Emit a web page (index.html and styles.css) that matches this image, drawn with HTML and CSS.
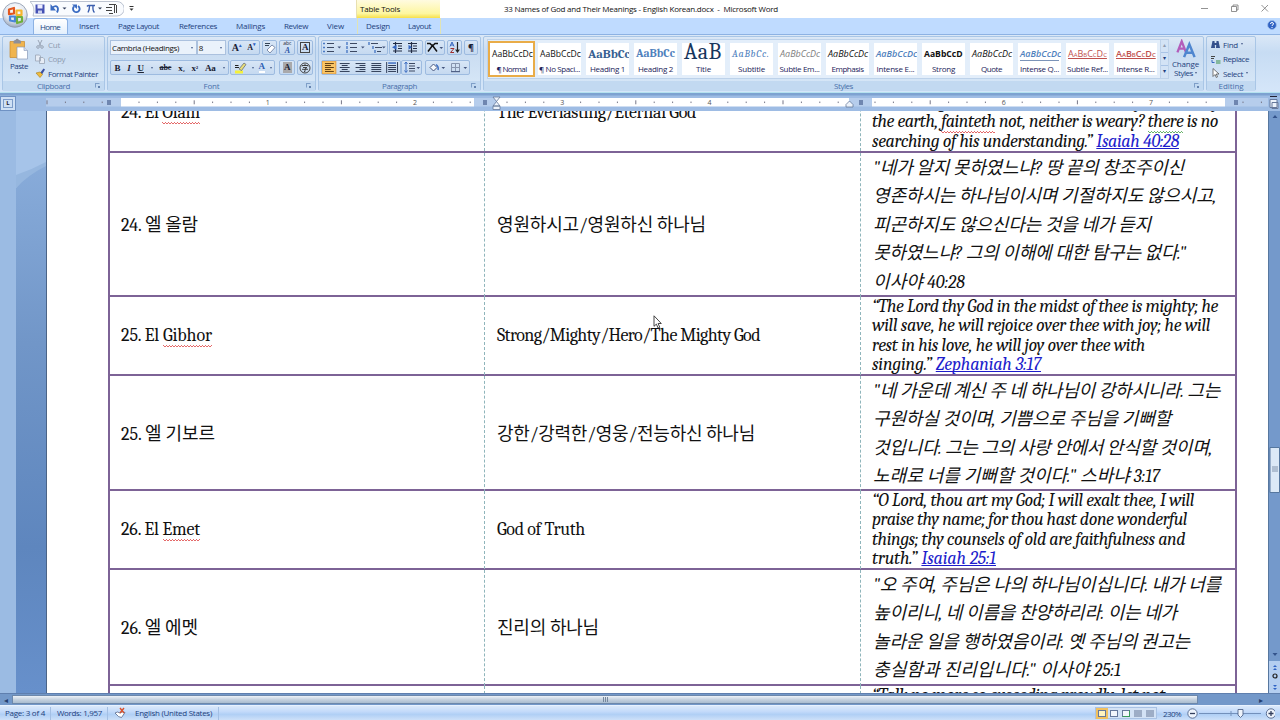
FILE: index.html
```html
<!DOCTYPE html>
<html lang="en">
<head>
    <meta charset="UTF-8">
    <meta name="viewport" content="width=device-width, initial-scale=1.0">
    <title>33 Names of God and Their Meanings - English Korean.docx - Microsoft Word</title>
    <link rel="stylesheet" href="styles.css">
</head>
<body>
<div class="window">

    <!-- Office button lies over the title bar and the tabs -->
    <div class="office-btn">
        <svg width="26" height="26" viewBox="0 0 26 26">
            <defs>
                <radialGradient id="orb" cx=".5" cy=".3" r=".75"><stop offset="0" stop-color="#fff"/><stop offset=".6" stop-color="#dfe5ee"/><stop offset="1" stop-color="#8b9ab3"/></radialGradient>
            </defs>
            <circle cx="13" cy="13" r="12.3" fill="url(#orb)" stroke="#8a96aa" stroke-width=".8"/>
            <g fill="none" stroke-width="2.2" stroke-linejoin="round">
                <path d="M7 7.500l5-1.500v5.500l-5 .6z" stroke="#e2571e"/>
                <path d="M14.500 8.500h5v4.500h-5z" stroke="#f4b52e"/>
                <path d="M8 14.500h5v5l-5-1z" stroke="#4a86d8"/>
                <path d="M15 15h5v4.500l-5 1.500z" stroke="#6eb03d"/>
            </g>
        </svg>
    </div>

    <div class="titlebar">
        <div class="qat">
            <svg width="94" height="16" viewBox="0 0 94 16">
                <path d="M0 .5H87a7 7 0 0 1 0 14.500H3Q6 6 0 .5z" fill="#f9fbfe" stroke="#a9b3c4" stroke-width=".8"/>
                <path d="M5.500 3.500h9v9h-9z" fill="#4551b4"/><path d="M7.500 3.500h5v4h-5z" fill="#eef"/><path d="M8 9.500h4v3H8z" fill="#cdd2f0"/>
                <path d="M22.500 6.500c4-3 7-.5 4.500 5" fill="none" stroke="#3a6bc2" stroke-width="1.900"/><path d="M20.500 3v6.500h5.500z" fill="#3a6bc2"/>
                <path d="M32.500 6.500h4l-2 2zM68 6.500h4l-2 2z" fill="#333f5c"/>
                <path d="M44 5.500a3.300 3.300 0 1 0 4-.5" fill="none" stroke="#3a6bc2" stroke-width="1.900"/><path d="M42 3.500h5v4.500z" fill="#3a6bc2"/>
                <path d="M57 5.500q1-1.500 2.500-1H65M59.500 5q0 4-1.500 6.500M63 5q-.5 5 1.500 6.500" fill="none" stroke="#3d5fae" stroke-width="1.400"/>
                <path d="M79 3.500h7M76 6.500h6M76 9.500h6M79 12.500h4M84.500 4v8M86.500 4v8" stroke="#444" stroke-width="1" fill="none"/>
            </svg>
            <svg width="8" height="16" viewBox="0 0 8 16"><path d="M1.500 5.500h4" stroke="#333"/><path d="M1.500 7.500h4l-2 2.200z" fill="#333"/></svg>
        </div>
        <div class="table-tools"><span data-w="40">Table Tools</span></div>
        <div class="title"><span data-w="274">33 Names of God and Their Meanings - English Korean.docx&nbsp; -&nbsp; Microsoft Word</span></div>
        <svg class="win-btns" width="76" height="16" viewBox="0 0 76 16" fill="none" stroke="#777" stroke-width=".8">
            <path d="M3 7.500h7M33.500 5.500h5v5h-5zM35 5.500V4h5v5h-1.500M63.500 4l6.500 6.500M70 4l-6.500 6.500"/>
        </svg>
    </div>

    <div class="tabs">
        <div class="tab active"><span data-w="20">Home</span></div>
        <div class="tab tab-insert"><span data-w="20">Insert</span></div>
        <div class="tab tab-page"><span data-w="41">Page Layout</span></div>
        <div class="tab tab-ref"><span data-w="38">References</span></div>
        <div class="tab tab-mail"><span data-w="29">Mailings</span></div>
        <div class="tab tab-review"><span data-w="24">Review</span></div>
        <div class="tab tab-view"><span data-w="17">View</span></div>
        <div class="tab tab-design"><span data-w="24">Design</span></div>
        <div class="tab tab-layout"><span data-w="23">Layout</span></div>
        <svg class="help" width="10" height="10" viewBox="0 0 10 10"><circle cx="5" cy="5" r="4.400" fill="#2f62c4" stroke="#9dbbe8" stroke-width=".8"/><path d="M3.500 4Q3.500 2.500 5 2.500T6.500 4Q6.300 4.800 5 5.500V6M5 7v1" fill="none" stroke="#fff" stroke-width="1"/></svg>
    </div>

    <div class="ribbon">
        <div class="group g-clipboard">
            <div class="group-body clip">
                <div class="paste">
                    <svg width="20" height="22" viewBox="0 0 20 22">
                        <path d="M1 3.500h14.500v16H1z" fill="#f0b44e" stroke="#c98a2b" stroke-width=".7"/>
                        <path d="M4.500 3.500q0-1.500 2-1.500 1.500-2.500 3.500 0 2 0 2 1.500v2h-7.500z" fill="#8d8f98"/>
                        <path d="M8 9h7l3.500 3.500v8.500H8z" fill="#fff" stroke="#8899b8" stroke-width=".7"/><path d="M15 9v3.500h3.500" fill="#d5dff0" stroke="#8899b8" stroke-width=".6"/>
                    </svg>
                    <span data-w="18">Paste</span>
                    <i class="arrow"></i>
                </div>
                <div class="clip-list">
                    <div class="off"><svg width="10" height="10" viewBox="0 0 10 10" fill="none" stroke="#99a4b5"><path d="M3 1l3 6M7 1L4 7"/><circle cx="3" cy="8" r="1.300"/><circle cx="7" cy="8" r="1.300"/></svg><span data-w="12">Cut</span></div>
                    <div class="off"><svg width="10" height="10" viewBox="0 0 10 10" fill="#e6ecf5" stroke="#99a4b5" stroke-width=".8"><path d="M.5 1h4l1 1v5h-5zM4.500 3.500H8l1.500 1.500v4.500h-5z"/></svg><span data-w="17">Copy</span></div>
                    <div><svg width="10" height="10" viewBox="0 0 10 10"><path d="M5 5l3.500-4.500 1.500 1L7 6.500z" fill="#3a4fa0"/><path d="M1 5l4-1 2.500 2.500L5 9.500z" fill="#eebc3e" stroke="#a77b1c" stroke-width=".6"/></svg><span data-w="50">Format Painter</span></div>
                </div>
            </div>
            <div class="group-label"><span data-w="33">Clipboard</span><i class="launch"></i></div>
        </div>

        <div class="group g-font">
            <div class="group-body">
                <div class="tools row-one">
                    <div class="combo family"><span data-w="67">Cambria (Headings)</span><i class="arrow"></i></div>
                    <div class="combo size"><span>8</span><i class="arrow"></i></div>
                    <div class="btns grow"><b class="serif big">A<sup>▴</sup></b><b class="serif mid">A<sup>▾</sup></b></div>
                    <div class="btns one"><svg width="12" height="12" viewBox="0 0 12 12"><path d="M1 1.500h5M1 3.500h4" stroke="#345"/><path d="M3 8l5-5 3 2.500L6 11z" fill="#fff" stroke="#66779b" stroke-width=".8"/></svg></div>
                    <div class="btns one abc"><span>abc</span><em>A</em></div>
                    <div class="btns one"><b class="boxed">A</b></div>
                </div>
                <div class="tools row-two">
                    <div class="btns seven">
                        <b class="serif">B</b><b class="serif it">I</b><b class="serif un">U</b><i class="arrow"></i><b class="serif strike">abc</b><b class="serif">x<sub>₂</sub></b><b class="serif">x<sub>²</sub></b><b class="serif">Aa</b><i class="arrow"></i>
                    </div>
                    <div class="btns colors">
                        <svg width="13" height="13" viewBox="0 0 13 13"><path d="M1 9.500h8v3H1z" fill="#f4f03a"/><path d="M5 8l5-6 2 1.500-4.500 6z" fill="#e8dd7a" stroke="#56606f" stroke-width=".7"/><path d="M1 4.500h3.500M1 6.500h4" stroke="#222" stroke-width="1.200"/></svg><i class="arrow"></i>
                        <b class="serif blue-a">A</b><i class="arrow"></i>
                    </div>
                    <div class="btns one two-b"><b class="shaded">A</b></div>
                    <div class="btns one"><svg width="12" height="12" viewBox="0 0 12 12" fill="none" stroke="#333" stroke-width=".9"><circle cx="6" cy="6" r="5"/><path d="M3 4.500V3.500h6v1M6 2v2M4 5.500h4L6 7v2.500H5M3 7.300h6"/></svg></div>
                </div>
            </div>
            <div class="group-label"><span data-w="16">Font</span><i class="launch"></i></div>
        </div>

        <div class="group g-para">
            <div class="group-body">
                <div class="tools row-one">
                    <div class="btns w65">
                        <svg width="65" height="13" viewBox="0 0 65 13" fill="none" stroke="#3c4963" stroke-width="1.100">
                            <path d="M5 2.500h7M5 6.500h7M5 10.500h7M28 2.500h7M28 6.500h7M28 10.500h7M49 2.500h7M53 6.500h7M55 10.500h4"/>
                            <path d="M1 2.500h2M1 6.500h2M1 10.500h2M25 1v3M25 5v3M25 9v3M47 1v3M51 5v3M53 9v3" stroke="#4a79c4" stroke-width="1.400"/>
                            <path d="M15.500 5.500h3.600l-1.800 2zM39 5.500h3.600l-1.800 2zM60 5.500h3.600l-1.800 2z" fill="#44557d" stroke="none"/>
                        </svg>
                    </div>
                    <div class="btns w32">
                        <svg width="32" height="13" viewBox="0 0 32 13" fill="none" stroke="#222c44" stroke-width="1.200">
                            <path d="M3 2.500h9M8 5h4M8 7.500h4M3 10h9M18 2.500h9M23 5h4M23 7.500h4M18 10h9M5.500 1v11M21.500 1v11"/>
                            <path d="M6.500 3.700v5L2 6.200zM18.500 3.700v5L22 6.200z" fill="#3566c0" stroke="none"/>
                        </svg>
                    </div>
                    <div class="btns w19"><svg width="18" height="13" viewBox="0 0 18 13"><path d="M2 10.500L6.500 4.500 11 10.500M1 2.500h3l2 2M12 2.500H9l-2 2" fill="none" stroke="#111" stroke-width="1.500"/><path d="M13.500 6h3.600l-1.800 2z" fill="#44557d"/></svg></div>
                    <div class="btns w15"><svg width="13" height="13" viewBox="0 0 13 13" fill="none"><path d="M2 5.500L4 1l2 4.500M2.700 4h2.600" stroke="#3566c0"/><path d="M2.500 7.500H6l-3.500 4H6" stroke="#a03030"/><path d="M9.500 1v9M7.700 8.500l1.800 2.500 1.800-2.500" stroke="#222" stroke-width="1.200"/></svg></div>
                    <div class="btns w15"><b class="pil">¶</b></div>
                </div>
                <div class="tools row-two">
                    <div class="btns w79">
                        <svg width="79" height="13" viewBox="0 0 79 13" fill="none" stroke="#2d3a54">
                            <path d="M0 0h14v13H0z" fill="#fbc766" stroke="#e39a3c"/>
                            <path d="M3 2.500h9M3 4.500h6M3 6.500h9M3 8.500h6M3 10.500h9" stroke="#5c3b10"/>
                            <path d="M18 2.500h10M20 4.500h6M18 6.500h10M20 8.500h6M18 10.500h10M34 2.500h10M38 4.500h6M34 6.500h10M38 8.500h6M34 10.500h10M50 2.500h10M50 4.500h10M50 6.500h10M50 8.500h10M50 10.500h10M67 4.500h8M67 6.500h8M67 8.500h8M67 10.500h8M65.500 1v11M76.500 1v11"/>
                            <path d="M67 2h8" stroke="#3f6fc2" stroke-width="1.500"/>
                        </svg>
                    </div>
                    <div class="btns w20"><svg width="18" height="13" viewBox="0 0 18 13" fill="none"><path d="M6 2.500h6M6 5h6M6 7.500h6M6 10h6" stroke="#3c4963"/><path d="M3 1v10M1.500 3L3 1l1.500 2M1.500 9.500L3 11.500l1.500-2" stroke="#3f6fc2"/><path d="M13.500 6h3.600l-1.800 2z" fill="#44557d"/></svg></div>
                    <div class="btns w43"><svg width="42" height="13" viewBox="0 0 42 13" fill="none"><path d="M3 6.500L6.500 3 10 6.500 6.500 10z" fill="#f5f8fc" stroke="#44557d"/><path d="M9 3.500q3 2 2 5.500" stroke="#3f6fc2" stroke-width="1.500"/><path d="M24.500 2.500h8v8h-8zM28.500 2.500v8M24.500 6.500h8" stroke="#8795ae"/><path d="M24 10.700h9" stroke="#44557d"/><path d="M14.500 6h3.600l-1.800 2zM36.500 6h3.600l-1.800 2z" fill="#44557d"/></svg></div>
                </div>
            </div>
            <div class="group-label"><span data-w="35">Paragraph</span><i class="launch"></i></div>
        </div>

        <div class="group g-styles">
            <div class="group-body styles">
                <div class="gallery">
                    <div class="tile selected"><b class="pv">AaBbCcDc</b><span data-w="30">¶ Normal</span></div>
                    <div class="tile"><b class="pv">AaBbCcDc</b><span data-w="41">¶ No Spaci...</span></div>
                    <div class="tile"><b class="pv h1">AaBbCc</b><span data-w="35">Heading 1</span></div>
                    <div class="tile"><b class="pv h2">AaBbCc</b><span data-w="35">Heading 2</span></div>
                    <div class="tile"><b class="pv ttl">AaB</b><span data-w="15">Title</span></div>
                    <div class="tile"><b class="pv sub">AaBbCc.</b><span data-w="27">Subtitle</span></div>
                    <div class="tile"><b class="pv em gray">AaBbCcDc</b><span data-w="40">Subtle Em...</span></div>
                    <div class="tile"><b class="pv em">AaBbCcDc</b><span data-w="32">Emphasis</span></div>
                    <div class="tile"><b class="pv em blue">AaBbCcDc</b><span data-w="38">Intense E...</span></div>
                    <div class="tile"><b class="pv strong">AaBbCcD</b><span data-w="23">Strong</span></div>
                    <div class="tile"><b class="pv em">AaBbCcDc</b><span data-w="21">Quote</span></div>
                    <div class="tile"><b class="pv em blue line">AaBbCcDc</b><span data-w="39">Intense Q...</span></div>
                    <div class="tile"><b class="pv ref">AaBbCcDc</b><span data-w="41">Subtle Ref...</span></div>
                    <div class="tile"><b class="pv ref heavy">AaBbCcDc</b><span data-w="38">Intense R...</span></div>
                    <div class="gallery-nav"><i class="off">▴</i><i>▾</i><i>▾</i></div>
                </div>
                <div class="change">
                    <svg width="22" height="21" viewBox="0 0 22 22" fill="none"><path d="M2 14L6.500 2.500 11 14M3.500 10h6" stroke="#b35cba" stroke-width="2.400"/><path d="M9 19L14.500 5.500 20 19M11 14.500h7" stroke="#4f86cf" stroke-width="2.600"/></svg>
                    <span data-w="27">Change</span>
                    <div><span data-w="19">Styles</span><i class="arrow"></i></div>
                </div>
            </div>
            <div class="group-label"><span data-w="19">Styles</span><i class="launch"></i></div>
        </div>

        <div class="group g-edit">
            <div class="group-body edit">
                <div><svg width="11" height="10" viewBox="0 0 11 10"><path d="M1 9L2.500 2h2L5 9zM6 9l.5-7h2L10 9zM4 4h3v2H4z" fill="#34508c"/></svg><span data-w="15">Find</span><i class="arrow"></i></div>
                <div><svg width="11" height="10" viewBox="0 0 11 10"><path d="M1 2.500h4M1 4.500h3" stroke="#444" stroke-width="1.200"/><path d="M6 7h4.500M6 9h4.500" stroke="#3d8f48" stroke-width="1.200"/><path d="M2 6v2.500h2.500" fill="none" stroke="#3566c0"/></svg><span data-w="26">Replace</span></div>
                <div><svg width="11" height="10" viewBox="0 0 11 10"><path d="M3 .5v8l2-2 1.300 3 1.200-.6L6.300 6H9z" fill="#fff" stroke="#555" stroke-width=".8"/></svg><span data-w="20">Select</span><i class="arrow"></i></div>
            </div>
            <div class="group-label"><span data-w="25">Editing</span></div>
        </div>
    </div>

    <div class="ruler">
        <div class="tab-stop">L</div>
        <svg id="ruler" width="1264" height="16" viewBox="16 95 1264 16"></svg>
    </div>

    <div class="workspace">
        <div class="vruler"></div>
        <div class="backdrop">
            <svg width="30" height="582" viewBox="0 0 30 582">
                <defs><linearGradient id="sky" x1="0" y1="0" x2="0" y2="1"><stop offset="0" stop-color="#8fb2df"/><stop offset=".4" stop-color="#7196c8"/><stop offset=".75" stop-color="#5e86be"/><stop offset="1" stop-color="#6790cb"/></linearGradient></defs>
                <path d="M0 0h30v582H0z" fill="url(#sky)"/>
                <path d="M0 0h30v52Q12 62 0 77z" fill="#a6c4e9"/>
                <path d="M0 64Q15 59 30 51v4Q12 64 0 77z" fill="#96b7df"/>
            </svg>
        </div>
        <div class="page">
            <div class="names">
                <div class="row en r79">
                    <div class="cell"><p data-w="79">24. El <u class="bad">Olam</u></p></div>
                    <div class="cell"><p data-w="199">The Everlasting/Eternal God</p></div>
                    <div class="cell verse">
                        <p data-w="346">everlasting God, the Lord, the Creator of the ends of</p>
                        <p data-w="346">the earth, <u class="bad">fainteth</u> not, neither is weary? <u class="gram">there</u> is no</p>
                        <p data-w="307">searching of his understanding.” <a>Isaiah 40:28</a></p>
                    </div>
                </div>
                <div class="row ko r144">
                    <div class="cell"><p data-w="77">24. 엘 올람</p></div>
                    <div class="cell"><p data-w="209">영원하시고/영원하신 하나님</p></div>
                    <div class="cell verse">
                        <p data-w="311">"네가 알지 못하였느냐? 땅 끝의 창조주이신</p>
                        <p data-w="343">영존하시는 하나님이시며 기절하지도 않으시고,</p>
                        <p data-w="278">피곤하지도 않으신다는 것을 네가 듣지</p>
                        <p data-w="313">못하였느냐? 그의 이해에 대한 탐구는 없다."</p>
                        <p data-w="92">이사야 40:28</p>
                    </div>
                </div>
                <div class="row en r79">
                    <div class="cell"><p data-w="91">25. El <u class="bad">Gibhor</u></p></div>
                    <div class="cell"><p data-w="263">Strong/Mighty/Hero/The Mighty God</p></div>
                    <div class="cell verse">
                        <p data-w="346">“The Lord thy God in the midst of thee is mighty; he</p>
                        <p data-w="338">will save, he will rejoice over thee with joy; he will</p>
                        <p data-w="273">rest in his love, he will joy over thee with</p>
                        <p data-w="169">singing.” <a>Zephaniah 3:17</a></p>
                    </div>
                </div>
                <div class="row ko r115">
                    <div class="cell"><p data-w="94">25. 엘 기보르</p></div>
                    <div class="cell"><p data-w="258">강한/강력한/영웅/전능하신 하나님</p></div>
                    <div class="cell verse">
                        <p data-w="347">"네 가운데 계신 주 네 하나님이 강하시니라. 그는</p>
                        <p data-w="298">구원하실 것이며, 기쁨으로 주님을 기뻐할</p>
                        <p data-w="339">것입니다. 그는 그의 사랑 안에서 안식할 것이며,</p>
                        <p data-w="287">노래로 너를 기뻐할 것이다." 스바냐 3:17</p>
                    </div>
                </div>
                <div class="row en r79">
                    <div class="cell"><p data-w="79">26. El <u class="bad">Emet</u></p></div>
                    <div class="cell"><p data-w="88">God of Truth</p></div>
                    <div class="cell verse">
                        <p data-w="322">“O Lord, thou art my God; I will exalt thee, I will</p>
                        <p data-w="315">praise thy name; for thou hast done wonderful</p>
                        <p data-w="313">things; thy counsels of old are faithfulness and</p>
                        <p data-w="124">truth.” <a>Isaiah 25:1</a></p>
                    </div>
                </div>
                <div class="row ko r116">
                    <div class="cell"><p data-w="77">26. 엘 에멧</p></div>
                    <div class="cell"><p data-w="102">진리의 하나님</p></div>
                    <div class="cell verse">
                        <p data-w="348">"오 주여, 주님은 나의 하나님이십니다. 내가 너를</p>
                        <p data-w="304">높이리니, 네 이름을 찬양하리라. 이는 네가</p>
                        <p data-w="317">놀라운 일을 행하였음이라. 옛 주님의 권고는</p>
                        <p data-w="248">충실함과 진리입니다." 이사야 25:1</p>
                    </div>
                </div>
                <div class="row en r79 last">
                    <div class="cell"></div>
                    <div class="cell"></div>
                    <div class="cell verse"><p data-w="293">“Talk no more so exceeding proudly; let not</p></div>
                </div>
            </div>
        </div>
        <div class="vscroll">
            <svg width="12" height="582" viewBox="0 0 12 582">
                <path d="M3.500 7h5L6 4zM3.500 542h5L6 545z" fill="#34548c"/>
                <path d="M1 336.500h9.500v45H1z" fill="#dce9f7" stroke="#56779f"/>
                <path d="M3 356h6M3 358h6M3 360h6" stroke="#8294ad"/>
                <path d="M0 550h12v32H0z" fill="#b4cef0"/>
                <path d="M4 556l2-2 2 2zM4 559l2-2 2 2zM4 574h4l-2 2zM4 577h4l-2 2z" fill="#2f62c4"/>
                <circle cx="6" cy="565" r="2" fill="none" stroke="#222" stroke-width="1.200"/>
            </svg>
        </div>
        <svg class="cursor" width="10" height="15" viewBox="0 0 10 15"><path d="M1 .8v10.500l2.400-2.200 1.700 4 1.700-.8-1.700-3.800h3.200z" fill="#fff" stroke="#333" stroke-width=".9"/></svg>
    </div>

    <div class="hscroll">
        <i class="hs-left">◂</i><div class="thumb"><i></i></div><i class="hs-right">▸</i>
    </div>

    <div class="status">
        <div class="st st-page"><span data-w="40">Page: 3 of 4</span></div>
        <div class="st st-words"><span data-w="45">Words: 1,957</span></div>
        <div class="st st-proof"><svg width="12" height="12" viewBox="0 0 12 12"><path d="M1 6q2.500-2 5 0 2.500-2 5-.5L7.500 10.500Q5 11 1 6z" fill="#fff" stroke="#51658b" stroke-width=".8"/><path d="M6 1l4 5M10 1L6 6" stroke="#d8502c" stroke-width="1.400"/></svg></div>
        <div class="st st-lang"><span data-w="77">English (United States)</span></div>
        <div class="views">
            <i class="view on"></i><i class="view"></i><i class="view web"></i><i class="view out"></i><i class="view out"></i>
        </div>
        <span class="pct" data-w="18">230%</span>
        <svg width="90" height="15" viewBox="0 0 90 15">
            <path d="M14 7.500h62" stroke="#7390bb"/><path d="M46 5v5" stroke="#7390bb"/>
            <circle cx="7.500" cy="7.500" r="4.700" fill="#eef4fc" stroke="#51658b" stroke-width=".9"/><path d="M5 7.500h5" stroke="#333f5c" stroke-width="1.300"/>
            <circle cx="86" cy="7.500" r="4.700" fill="#eef4fc" stroke="#51658b" stroke-width=".9"/><path d="M83.500 7.500h5M86 5v5" stroke="#333f5c" stroke-width="1.300"/>
            <path d="M53 3.500h5v5.500L55.500 11.500 53 9z" fill="#eef4fc" stroke="#51658b" stroke-width=".9"/>
        </svg>
    </div>
</div>

<script src="script.js"></script>
</body>
</html>
```
FILE: styles.css
```css
* {
    box-sizing: border-box;
}

body {
    margin: 0;
    overflow: hidden;
    font-family: "Open Sans", "Noto Sans", sans-serif;
    font-size: 8px;
    color: #1e3f7d;
}

i {
    font-style: normal;
}

.window {
    position: relative;
    width: 1280px;
    height: 720px;
    display: flex;
    flex-direction: column;
    background: #bfdbff;
}

[data-w] {
    display: inline-block;
    white-space: nowrap;
}

/* title bar */
.office-btn {
    position: absolute;
    left: 2px;
    top: 2px;
    z-index: 2;
}

.titlebar {
    height: 18px;
    background: #fff;
    display: flex;
    flex: none;
    color: #111;
    line-height: 18px;
}

.qat {
    width: 356px;
    padding: 1px 0 0 30px;
    display: flex;
    gap: 4px;
}

.table-tools {
    width: 84px;
    padding-left: 3px;
    background: linear-gradient(#fffbe0, #fdf6a0 75%, #f7e04a);
    border-left: 1px solid #e8e0b0;
}

.title {
    width: 758px;
    padding-left: 64px;
}

.win-btns {
    margin-top: 1px;
}

/* tabs */
.tabs {
    height: 16px;
    flex: none;
    display: flex;
    padding-left: 33px;
    background: #bfdbff;
    line-height: 16px;
}

.tab {
    padding-left: 7px;
}

.tab.active {
    width: 35px;
    background: linear-gradient(#fff, #e3effc);
    border: 1px solid #8db2e3;
    border-bottom: none;
    border-radius: 3px 3px 0 0;
    padding-left: 6px;
    line-height: 15px;
}

.tab-insert { width: 43px; padding-left: 11px; }
.tab-page { width: 61px; }
.tab-ref { width: 57px; }
.tab-mail { width: 48px; }
.tab-review { width: 43px; }
.tab-view { width: 37px; }
.tab-design { width: 42px; padding-left: 8px; border-left: 1px solid #e0e3b5; }
.tab-layout { width: 42px; padding-left: 9px; border-right: 1px solid #e0e3b5; }

.help {
    margin: 2px 3px 0 auto;
}

/* ribbon */
.ribbon {
    height: 59px;
    flex: none;
    display: flex;
    gap: 2px;
    padding: 1px 1px 1px 2px;
    background: linear-gradient(#dbe8f7, #c7dcf3 30%, #d5e6f9);
    border-top: 1px solid #8db2e3;
    border-bottom: 1px solid #b5e2ef;
}

.group {
    border: 1px solid #a9c6e6;
    border-radius: 2px;
    display: flex;
    flex-direction: column;
    background: linear-gradient(#dce8f6, #c9dcf1 28%, #d8e8f8);
}

.g-clipboard { width: 103px; }
.g-font { width: 209px; }
.g-para { width: 163px; }
.g-styles { width: 721px; }
.g-edit { width: 50px; }

.group-body {
    height: 43px;
    flex: none;
}

.group-label {
    height: 10px;
    flex: none;
    line-height: 10px;
    margin-top: 1px;
    display: flex;
    align-items: center;
    justify-content: center;
    background: #c2d9f1;
    color: #4a70aa;
    position: relative;
}

.launch {
    position: absolute;
    right: 4px;
    top: 2px;
    width: 5px;
    height: 5px;
    border: 1px solid #7f9fc8;
    border-right-color: transparent;
    border-bottom-color: transparent;
}

.launch::after {
    content: "";
    display: block;
    width: 2px;
    height: 2px;
    margin: 2px 0 0 2px;
    background: #6583ae;
}

.arrow {
    width: 0;
    height: 0;
    border: 1.8px solid transparent;
    border-top: 2.2px solid #4a5f8c;
    border-bottom: none;
}

.clip {
    display: flex;
}

.paste {
    width: 32px;
    display: flex;
    flex-direction: column;
    align-items: center;
    padding-top: 1px;
    line-height: 11px;
}

.paste .arrow {
    margin-top: 1px;
}

.clip-list div,
.edit div {
    display: flex;
    align-items: center;
    height: 14.5px;
    gap: 2px;
}

.clip-list div {
    gap: 3px;
}

.off {
    color: #8e9bb0;
}

.tools {
    display: flex;
    height: 15px;
    margin-left: 2px;
}

.row-one { padding-top: 0; margin-top: 3px; }
.row-two { margin-top: 5px; }

.combo {
    height: 15px;
    background: #eaf2fb;
    border: 1px solid #abc1de;
    display: flex;
    align-items: center;
    justify-content: space-between;
    padding: 0 3px 0 1px;
    color: #111;
}

.family { width: 88px; }
.size { width: 30px; margin-right: 2px; }

.btns {
    height: 15px;
    border: 1px solid #9dbbe0;
    border-radius: 2px;
    display: flex;
    align-items: center;
    justify-content: space-around;
    color: #1b2233;
    background: linear-gradient(#d8e6f6, #c5d9f0);
    line-height: 12px;
}

.grow { width: 32px; margin-right: 2px; }
.one { width: 16px; margin-right: 2px; }
.seven { width: 121px; margin-right: 1px; }
.colors { width: 46px; margin-right: 2px; }
.w65 { width: 67px; margin-right: 1px; }
.w32 { width: 34px; margin-right: 2px; }
.w19 { width: 20px; margin-right: 2px; }
.w15 { width: 16px; margin-right: 2px; }
.w79 { width: 80px; }
.w20 { width: 21px; margin-right: 3px; }
.w43 { width: 45px; }

.two-b {
    margin-left: 2px;
}

.serif {
    font-family: "Liberation Serif", serif;
    font-size: 9px;
}

.big { font-size: 10px; }
.mid { font-size: 8px; }

.serif sup {
    font-size: 5px;
    vertical-align: 4px;
    line-height: 0;
    color: #2f62c4;
}

.serif sub {
    font-size: 7px;
    line-height: 0;
    vertical-align: 0;
}

.it { font-style: italic; }
.un { text-decoration: underline; }
.strike { text-decoration: line-through; font-size: 8px; }

.abc {
    flex-direction: column;
    font-size: 5px;
    line-height: 5px;
}

.abc em {
    font: italic bold 8px/7px "Liberation Serif", serif;
    color: #2f56a8;
}

.boxed {
    border: 1px solid #444;
    font: bold 9px/9px "Liberation Serif", serif;
    padding: 0 1px;
}

.shaded {
    background: #a9a9ab;
    font: bold 9px/11px "Liberation Serif", serif;
    padding: 0 1px;
}

.blue-a {
    color: #2c5db3;
    border-bottom: 2px solid #fff;
    line-height: 9px;
}

.pil {
    font-size: 9px;
}

/* style gallery */
.styles {
    display: flex;
    padding: 2px 0 0 3px;
}

.gallery {
    display: flex;
    width: 682px;
    height: 40px;
    background: #e3eefa;
    border: 1px solid #bdd2ea;
}

.tile {
    width: 43px;
    height: 32px;
    margin: 3px 3px 0 2px;
    flex: none;
    background: #fff;
    display: flex;
    flex-direction: column;
    align-items: center;
    color: #23235a;
    overflow: hidden;
    line-height: 10px;
}

.tile.selected {
    outline: 2px solid #e9ac48;
    outline-offset: 0;
}

.pv {
    width: 43px;
    height: 21px;
    flex: none;
    padding-left: 2px;
    overflow: hidden;
    white-space: nowrap;
    font: 8.6px/22px "Open Sans", "Noto Sans", sans-serif;
    color: #111;
}

.pv.h1,
.pv.h2 {
    font: bold 12.5px/22px Cambria, Caladea, "Liberation Serif", serif;
    color: #365f91;
}

.pv.h2 { font-size: 11.5px; color: #4f81bd; }
.pv.ttl { font: 22px/19px Cambria, Caladea, "Liberation Serif", serif; letter-spacing: .5px; color: #17365d; }
.pv.sub { font: italic 10px/22px Cambria, Caladea, "Liberation Serif", serif; letter-spacing: .8px; color: #4f81bd; }
.pv.em { font-style: italic; font-size: 9px; }
.pv.gray { color: #808080; }
.pv.blue { color: #4f81bd; font-weight: 600; }
.pv.strong { font-weight: bold; }
.pv.line { background: linear-gradient(#7b93b8, #7b93b8) 2px 17px / 39px 1px no-repeat; }
.pv.ref { font-variant: small-caps; font-size: 9px; text-decoration: underline; color: #c0504d; }
.pv.heavy { font-weight: 600; }

.gallery-nav {
    width: 9px;
    margin-left: auto;
    display: flex;
    flex-direction: column;
    border-left: 1px solid #bdd2ea;
}

.gallery-nav i {
    flex: 1;
    border-bottom: 1px solid #a9c4e6;
    background: #d3e3f5;
    text-align: center;
    font-size: 6px;
    line-height: 11px;
}

.gallery-nav i:last-child {
    border-bottom: none;
}

.change {
    width: 33px;
    display: flex;
    flex-direction: column;
    align-items: center;
    line-height: 8.7px;
}

.change div {
    display: flex;
    align-items: center;
    gap: 2px;
}

.edit {
    padding-left: 3px;
}

.edit .arrow {
    margin-left: 1px;
}

/* ruler */
.ruler {
    height: 18px;
    flex: none;
    display: flex;
    align-items: flex-end;
    background: linear-gradient(#7da2d1 0 2px, #9ebce4 3px);
}

.tab-stop {
    width: 16px;
    height: 15px;
    border: 1px solid #6f92c4;
    outline: 1px solid #7d9cc9;
    outline-offset: -4px;
    background: #cfe0f5;
    text-align: center;
    font-weight: bold;
    font-size: 6px;
    line-height: 13px;
    color: #223;
}

#ruler text {
    font-size: 7px;
    fill: #555;
    text-anchor: middle;
}

/* document */
.workspace {
    height: 582px;
    flex: none;
    display: flex;
    position: relative;
    overflow: hidden;
}

.vruler {
    width: 16px;
    background: #9bbbe3;
}

.backdrop {
    width: 30px;
}

.page {
    width: 1222px;
    height: 582px;
    overflow: hidden;
    background: #fff;
    border-left: 1px solid #4b6487;
    color: #111;
}

.names {
    width: 1129px;
    margin: -37px 0 0 61px;
    border: solid #7d6396;
    border-width: 0 2px;
}

.row {
    display: grid;
    grid-template-columns: 375px 376px 1fr;
    border-bottom: 2px solid #7d6396;
    font-family: Cambria, Caladea, "Liberation Serif", "Noto Sans CJK KR", serif;
    font-size: 18px;
}

.r79 { height: 79px; }
.r144 { height: 144px; }
.r115 { height: 115px; }
.r116 { height: 116px; }

.cell {
    display: flex;
    flex-direction: column;
    justify-content: center;
    align-items: flex-start;
    padding-left: 11px;
    border-right: 1px dashed #8fb5bb;
}

.cell:nth-child(2) {
    padding-left: 12px;
}

.cell:last-child {
    border-right: none;
}

.cell p {
    margin: 0;
    line-height: 19.4px;
}

.verse {
    font-style: italic;
}

.ko .cell {
    padding-top: 2px;
}

.ko .verse {
    padding-left: 12px;
}

.ko p {
    line-height: 28.4px;
}

.row:first-child .verse {
    justify-content: flex-end;
}

.last .verse {
    justify-content: flex-start;
}

/* spelling and grammar marks, two offset rows of dots */
.cell u {
    --mark: #e46a6a;
    text-decoration: none;
    padding-bottom: 1px;
    background:
        repeating-linear-gradient(90deg, var(--mark) 0 1px, transparent 1px 3px) 0 calc(100% - 1px) / 100% 1px no-repeat,
        repeating-linear-gradient(90deg, transparent 0 1px, var(--mark) 1px 3px) 0 100% / 100% 1px no-repeat;
}

.cell u.gram {
    --mark: #6cb56c;
}

.cell a {
    color: #1d1dcc;
    text-decoration: underline 1px;
    text-decoration-skip-ink: none;
}

.vscroll {
    width: 12px;
    background: #7499cb;
    border-left: 1px solid #57779f;
}

.cursor {
    position: absolute;
    left: 653px;
    top: 204px;
}

/* bottom bars */
.hscroll {
    height: 12px;
    flex: none;
    display: flex;
    align-items: center;
    background: #7398c9;
    border-top: 1px solid #5f7fae;
    color: #26406f;
    font-size: 8px;
}

.hs-left {
    width: 12px;
    text-align: center;
}

.thumb {
    width: 1186px;
    height: 9px;
    display: flex;
    align-items: center;
    justify-content: center;
    background: linear-gradient(#edf2f8, #c6d2df 50%, #a9bccf);
    border: 1px solid #6d88ab;
}

.thumb i {
    width: 5px;
    height: 5px;
    background: repeating-linear-gradient(90deg, #75879d 0 1px, transparent 1px 2px);
}

.hs-right {
    margin-left: 61px;
}

.status {
    height: 15px;
    flex: none;
    display: flex;
    align-items: center;
    background: linear-gradient(#dbe9fa, #c3dafa 40%, #b0cff5 60%, #cde0f8);
    border-top: 1px solid #e8f2ff;
}

.st {
    height: 13px;
    line-height: 12px;
    border-right: 1px solid #a3bfe4;
    padding-left: 6px;
}

.st-page { width: 51px; padding-left: 5px; }
.st-words { width: 57px; }
.st-proof { width: 21px; border: none; }
.st-lang { width: 90px; }

.views {
    margin-left: 876px;
    width: 62px;
    height: 12px;
    display: flex;
    align-items: center;
    background: #d3e2f5;
    border: 1px solid #a9c2e4;
}

.view {
    width: 8px;
    height: 7px;
    margin: 0 2px;
    border: 1px solid #66789b;
    background: #f3f6fb;
}

.view.on {
    background: #fff3c0;
    outline: 2px solid #f0c060;
}

.view.web { border-right-color: #3a9a5a; border-bottom-color: #3a9a5a; }
.view.out { background: #9dadc6; border-color: #9dadc6; }

.pct {
    margin: 0 4px 0 6px;
}
```
FILE: script.js
```js
// spread every label or line over its set width
document.querySelectorAll('[data-w]').forEach(el => {
    const width = el.getBoundingClientRect().width;
    const gap = (Number(el.dataset.w) - width) / el.textContent.length;
    el.style.letterSpacing = gap.toFixed(3) + 'px';
});

// ruler: an inch is 147.2px, with a mark at every eighth
const ruler = document.getElementById('ruler');
const inch = 147.2;
const zero = 120.6;
let marks = '';

[[46, 121, '#b6cdec'], [121, 474, '#fff'], [474, 497, '#b6cdec'], [497, 849, '#fff'],
 [849, 872, '#b6cdec'], [872, 1225, '#fff'], [1225, 1268, '#b6cdec']].forEach(([from, to, fill]) => {
    marks += `<rect x="${from}" y="98" width="${to - from}" height="8.5" fill="${fill}"/>`;
});

for (let k = -4; k < 63; k++) {
    const x = zero + k * inch / 8;
    const hidden = k === 0 || (x > 474 && x < 503) || (x > 840 && x < 873) || (x > 1222 && x < 1240);
    if (hidden) continue;
    if (k > 0 && k % 8 === 0) {
        marks += `<text x="${x}" y="105">${k / 8}</text>`;
    } else {
        const h = k % 4 === 0 ? 4 : 1.5;
        marks += `<rect x="${x - 0.5}" y="${102.3 - h / 2}" width="1" height="${h}" fill="#778"/>`;
    }
}

[109, 485, 861, 1236].forEach(x => {
    marks += `<rect x="${x - 2}" y="100" width="4" height="5" fill="#6f86b0"/>`;
});
marks += '<path d="M493 97h7l-3.500 4.500zM493 106l3.500-4.500 3.500 4.500zM493 106h7v3.500h-7zM846 107v-2.500l3.500-3.500 3.500 3.500v2.500z" fill="#edf3fb" stroke="#66789b" stroke-width=".8"/>';
marks += '<path d="M1270 96.500h7" stroke="#223"/><path d="M1270 99.500h7v8h-7zM1272 102.500h6v6h-6z" fill="#edf3fb" stroke="#66789b"/>';
ruler.innerHTML = marks;
```
